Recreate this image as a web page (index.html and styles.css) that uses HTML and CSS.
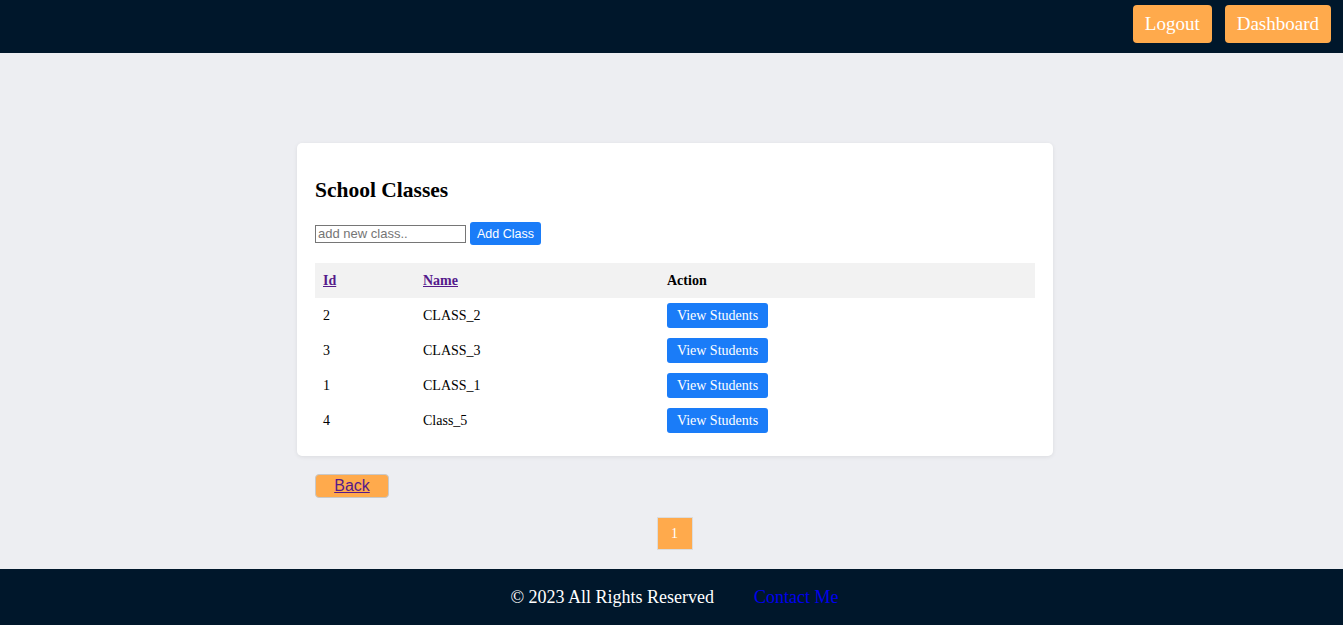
FILE: index.html
```html
<!DOCTYPE html>
<html lang="en">
<head>
    <meta charset="UTF-8">
    <meta name="viewport" content="width=device-width, initial-scale=1.0">
    <title>School Classes</title>
    <link rel="stylesheet" href="styles.css">
</head>
<body>

    <header class="topbar">
        <button class="nav-btn">Logout</button>
        <button class="nav-btn">Dashboard</button>
    </header>

    <main class="content">
        <div class="card">
            <h2>School Classes</h2>
            <form class="add-form">
                <input type="text" placeholder="add new class..">
                <button type="button" class="add-btn">Add Class</button>
            </form>
            <table class="classes">
                <thead>
                    <tr>
                        <th class="col-id"><a href="#" class="visited">Id</a></th>
                        <th class="col-name"><a href="#" class="visited">Name</a></th>
                        <th>Action</th>
                    </tr>
                </thead>
                <tbody>
                    <tr><td>2</td><td>CLASS_2</td><td><button class="view-btn">View Students</button></td></tr>
                    <tr><td>3</td><td>CLASS_3</td><td><button class="view-btn">View Students</button></td></tr>
                    <tr><td>1</td><td>CLASS_1</td><td><button class="view-btn">View Students</button></td></tr>
                    <tr><td>4</td><td>Class_5</td><td><button class="view-btn">View Students</button></td></tr>
                </tbody>
            </table>
        </div>

        <div class="back-row">
            <button class="back-btn"><a href="#" class="visited">Back</a></button>
        </div>

        <div class="pagination">
            <span class="page active">1</span>
        </div>
    </main>

    <footer class="footer">
        <span>&copy; 2023 All Rights Reserved</span>
        <a href="#" class="contact">Contact Me</a>
    </footer>

</body>
</html>
```

FILE: styles.css
```css
* {
    box-sizing: border-box;
}

body {
    margin: 0;
    font-family: "Liberation Serif", "Times New Roman", serif;
    background: #edeef2;
}

.topbar {
    height: 53px;
    background: #00172b;
    display: flex;
    justify-content: flex-end;
    align-items: flex-start;
    gap: 13px;
    padding: 5px 12px 0 0;
}

.nav-btn {
    height: 38px;
    padding: 0 12px;
    background: #ffaa4c;
    color: white;
    border: none;
    border-radius: 4px;
    font-family: "Liberation Serif", serif;
    font-size: 19px;
    cursor: pointer;
}

.content {
    height: 516px;
    padding-top: 90px;
}

.card {
    width: 756px;
    margin-left: 297px;
    background: white;
    border-radius: 5px;
    box-shadow: 0 1px 4px rgba(0, 0, 0, 0.08);
    padding: 35px 18px 18px;
}

.card h2 {
    margin: 0 0 20px;
    font-size: 21.5px;
    line-height: 24px;
}

.add-form {
    display: flex;
    align-items: center;
    gap: 4px;
    margin-bottom: 18px;
}

.add-form input {
    width: 151px;
    height: 18px;
    border: 1px solid #767676;
    padding: 0 2px;
    font-family: "Liberation Sans", Arial, sans-serif;
    font-size: 13px;
}

.add-form input::placeholder {
    color: #757575;
}

.add-btn {
    height: 23px;
    padding: 0 7px;
    background: #1a7cf8;
    color: white;
    border: none;
    border-radius: 3px;
    font-family: "Liberation Sans", Arial, sans-serif;
    font-size: 12.5px;
}

.classes {
    width: 720px;
    border-collapse: collapse;
    font-size: 14px;
}

.classes th,
.classes td {
    height: 35px;
    padding: 0 8px;
    text-align: left;
}

.classes th {
    background: #f2f2f2;
}

.col-id {
    width: 100px;
}

.col-name {
    width: 244px;
}

.visited {
    color: #551a8b;
}

.view-btn {
    height: 25px;
    width: 101px;
    padding: 0;
    background: #1a7cf8;
    color: white;
    border: none;
    border-radius: 3px;
    font-family: "Liberation Serif", serif;
    font-size: 14px;
    cursor: pointer;
}

.back-row {
    margin: 18px 0 0 315px;
}

.back-btn {
    width: 74px;
    height: 24px;
    padding: 0;
    background: #ffaa4c;
    border: 1px solid #c8c8c8;
    border-radius: 4px;
    font-family: "Liberation Sans", Arial, sans-serif;
    font-size: 16px;
}

.pagination {
    display: flex;
    justify-content: center;
    margin-top: 19px;
    padding-left: 6px;
}

.page {
    width: 36px;
    height: 33px;
    display: flex;
    align-items: center;
    justify-content: center;
    background: #ffaa4c;
    border: 1px solid #dcdcdc;
    color: white;
    font-size: 14px;
}

.footer {
    height: 56px;
    background: #00172b;
    display: flex;
    justify-content: center;
    align-items: center;
    gap: 40px;
    padding-left: 6px;
    color: white;
    font-size: 18px;
}

.contact {
    color: #0000ee;
    text-decoration: none;
}
```
